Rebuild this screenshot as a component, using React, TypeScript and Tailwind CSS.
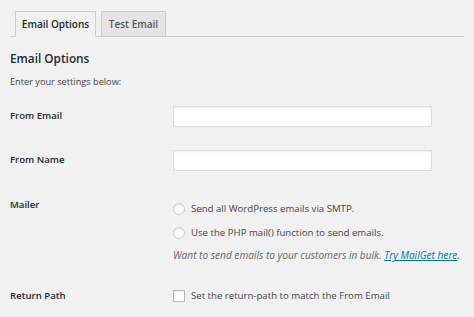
import React from 'react';

const font = { fontFamily: '"Open Sans", "Noto Sans", Arial, sans-serif' };

function Radio() {
  return (
    <span className="inline-block w-[12px] h-[12px] rounded-full border border-[#c8cbce] bg-[#fbfbfb] shadow-[inset_0_1px_2px_rgba(0,0,0,0.07)]" />
  );
}

function Checkbox() {
  return (
    <span className="inline-block w-[12px] h-[12px] border border-[#b4b9be] bg-white shadow-[inset_0_1px_2px_rgba(0,0,0,0.07)]" />
  );
}

export default function App() {
  return (
    <div
      className="w-[474px] h-[317px] overflow-hidden bg-[#f1f1f1] pt-[11px] px-[10px] text-[#444]"
      style={font}
    >
      {/* Tabs */}
      <div className="flex gap-[5px] pl-[5px] border-b border-[#cccccc]">
        <div className="h-[26px] w-[81px] -mb-px flex items-center justify-center pt-[1px] border border-[#cccccc] border-b-[#f1f1f1] bg-[#f1f1f1] text-[10px] font-semibold text-[#23282d]">
          Email Options
        </div>
        <div className="h-[25px] w-[65px] flex items-center justify-center pt-[1px] border border-b-0 border-[#cccccc] bg-[#e5e5e5] text-[10px] font-semibold text-[#555]">
          Test Email
        </div>
      </div>

      <h2 className="mt-[13px] text-[11.8px] leading-[16px] font-semibold text-[#23282d]">Email Options</h2>
      <p className="mt-[9px] text-[9.2px] leading-[14px] text-[#444]">Enter your settings below:</p>

      {/* From Email */}
      <div className="mt-[17px] flex items-center h-[21px]">
        <div className="w-[163px] text-[9.6px] font-semibold text-[#23282d]">From Email</div>
        <div className="w-[259px] h-[21px] bg-white border border-[#dddddd] shadow-[inset_0_1px_2px_rgba(0,0,0,0.07)]" />
      </div>

      {/* From Name */}
      <div className="mt-[23px] flex items-center h-[21px]">
        <div className="w-[163px] text-[9.6px] font-semibold text-[#23282d]">From Name</div>
        <div className="w-[259px] h-[21px] bg-white border border-[#dddddd] shadow-[inset_0_1px_2px_rgba(0,0,0,0.07)]" />
      </div>

      {/* Mailer */}
      <div className="mt-[26px] flex">
        <div className="w-[163px] pt-[1px] text-[9.6px] leading-[14px] font-semibold text-[#23282d]">Mailer</div>
        <div className="flex flex-col">
          <div className="h-[24px] flex items-center gap-[6px] text-[9.65px]">
            <Radio />
            <span>Send all WordPress emails via SMTP.</span>
          </div>
          <div className="h-[24px] flex items-center gap-[6px] text-[9.65px]">
            <Radio />
            <span>Use the PHP mail() function to send emails.</span>
          </div>
          <div className="h-[22px] flex items-center text-[10.1px] italic text-[#666]">
            <span>
              Want to send emails to your customers in bulk.{' '}
              <span className="text-[#0073aa] underline">Try MailGet here</span>.
            </span>
          </div>
        </div>
      </div>

      {/* Return Path */}
      <div className="mt-[19px] flex items-center h-[20px]">
        <div className="w-[163px] text-[9.6px] font-semibold text-[#23282d]">Return Path</div>
        <div className="flex items-center gap-[6px] text-[9.65px]">
          <Checkbox />
          <span>Set the return-path to match the From Email</span>
        </div>
      </div>
    </div>
  );
}
